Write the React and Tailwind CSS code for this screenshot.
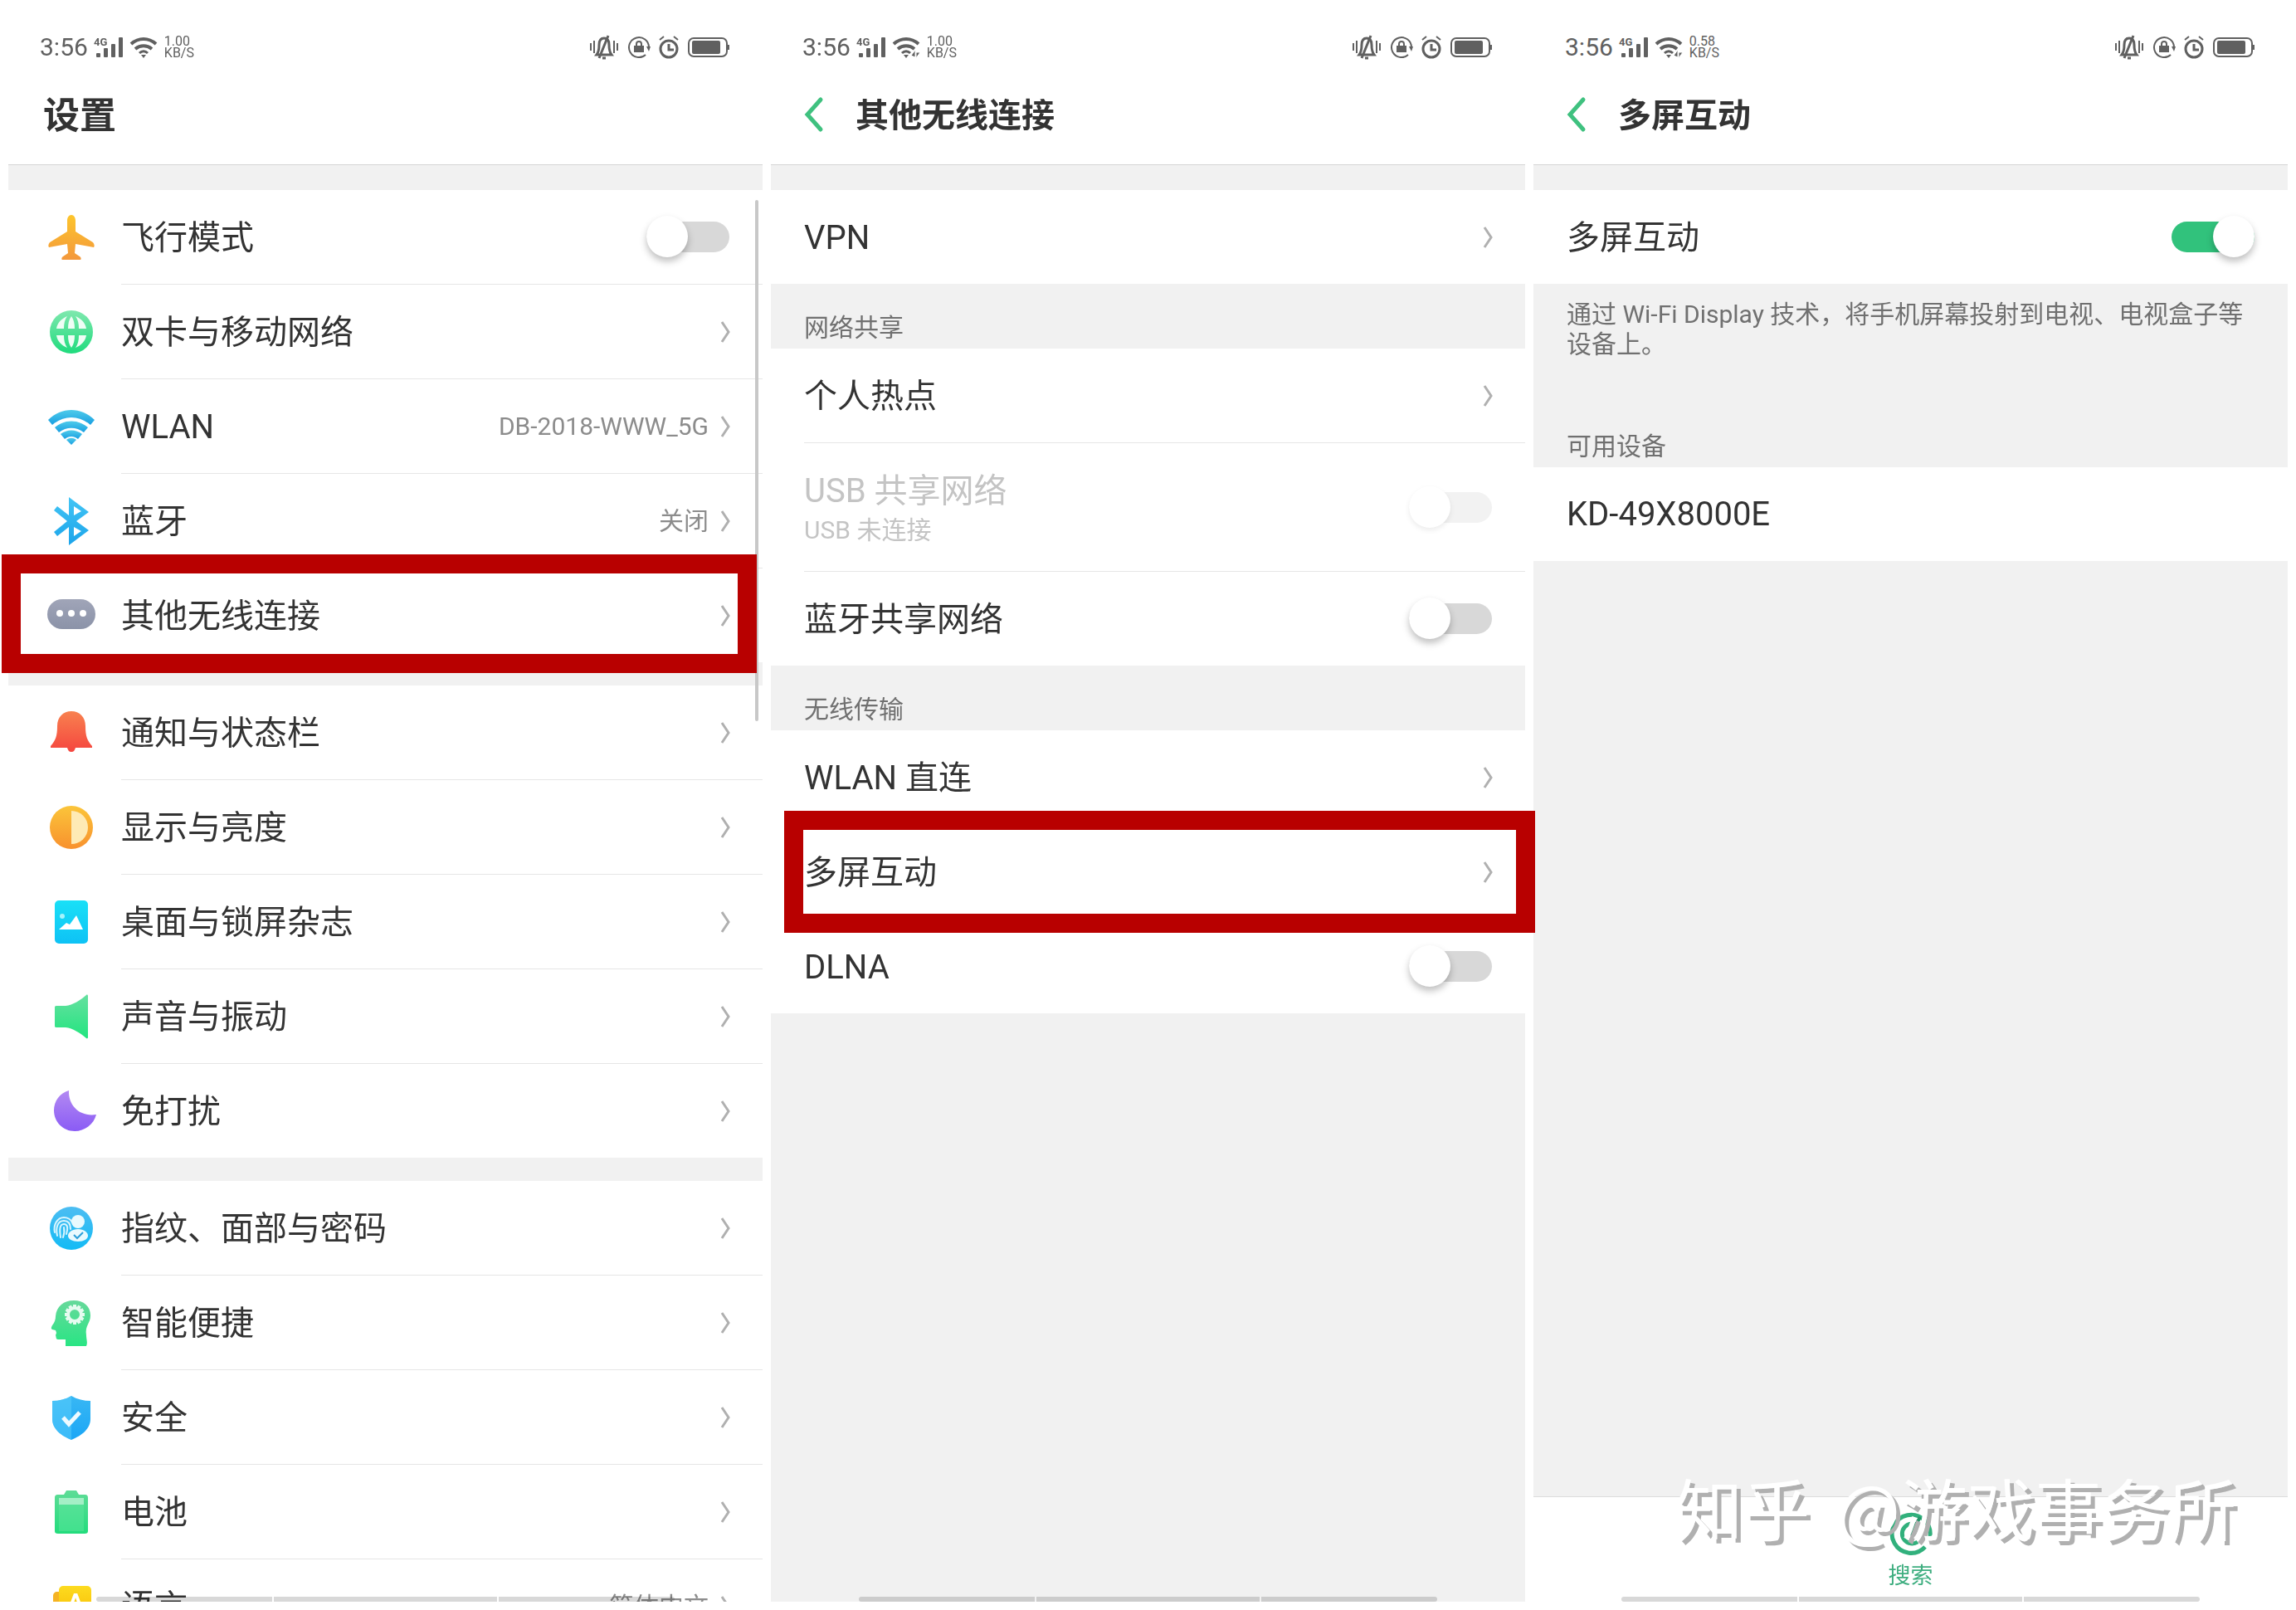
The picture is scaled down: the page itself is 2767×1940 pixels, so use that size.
import { Fragment } from "react";

function Gradient({ id, from, to }) {
  return (
    <linearGradient id={id} x1="0" y1="0" x2="0" y2="1">
      <stop offset="0" stopColor={from} />
      <stop offset="1" stopColor={to} />
    </linearGradient>
  );
}

function Icon({ id, from, to, children }) {
  return (
    <svg viewBox="0 0 60 60" className="size-[60px] shrink-0" fill={`url(#${id})`} aria-hidden="true">
      <defs>
        <Gradient id={id} from={from} to={to} />
      </defs>
      {children}
    </svg>
  );
}

const gearTeeth = Array.from({ length: 12 }, (_, i) => i * 30);

const icons = {
  plane: (
    <Icon id="plane" from="#fdc52c" to="#f3983c">
      <path d="M30 3c3 0 5 3 5 7v13l21 13c2 2 2 5 1 6l-22-4-1 11 6 4c2 1 2 4 1 4H19c-1 0-1-3 1-4l6-4-1-11-22 4c-1-1-1-4 1-6l21-13V10c0-4 2-7 5-7z" />
    </Icon>
  ),
  globe: (
    <Icon id="globe" from="#7fe8ae" to="#1fdb7d">
      <circle cx="30" cy="30" r="26" />
      <g fill="#effdf5">
        <path d="M30 11c-3 4-4 9-4 15h8c0-6-1-11-4-15zM30 49c-3-4-4-9-4-15h8c0 6-1 11-4 15z" />
        <path d="M25 11c-3 4-4 9-4 15h-9c1-7 6-12 13-15zM25 49c-3-4-4-9-4-15h-9c1 7 6 12 13 15z" />
        <path d="M35 11c3 4 4 9 4 15h9c-1-7-6-12-13-15zM35 49c3-4 4-9 4-15h9c-1 7-6 12-13 15z" />
      </g>
    </Icon>
  ),
  wlan: (
    <Icon id="wlan" from="#4fcbea" to="#199fe2">
      <path d="M2 22c16-16 40-16 56 0l-5 6c-14-12-32-12-46 0z" />
      <path d="M10 31c12-10 28-10 40 0l-5 6c-9-7-21-7-30 0z" />
      <path d="M17 39c8-6 18-6 26 0l-5 6c-5-4-11-4-16 0z" />
      <path d="M24 46c4-3 8-3 12 0l-6 6z" />
    </Icon>
  ),
  bluetooth: (
    <Icon id="bluetooth" from="#43c5f5" to="#1ba4ea">
      <path
        fillRule="evenodd"
        d="M27 1l24 18-15 11 15 11-24 18V37L13 48l-4-5 16-13L9 17l4-5 14 11zm6 11v11l9-5zm0 25v11l9-6z"
      />
    </Icon>
  ),
  more: (
    <Icon id="more" from="#a0a5b8" to="#8b93a8">
      <rect x="1" y="10" width="58" height="36" rx="18" />
      <g fill="#fff">
        <circle cx="16" cy="27" r="4" />
        <circle cx="30" cy="27" r="4" />
        <circle cx="44" cy="27" r="4" />
      </g>
    </Icon>
  ),
  bell: (
    <Icon id="bell" from="#f8814f" to="#f5463f">
      <path d="M30 4c10 0 17 7 17 18 0 12 2 17 8 24v2H35c-1 3-2 5-5 5s-4-2-5-5H5v-2c6-7 8-12 8-24 0-11 7-18 17-18z" />
    </Icon>
  ),
  sun: (
    <Icon id="sun" from="#fbc53a" to="#f8912e">
      <circle cx="30" cy="30" r="26" />
      <path d="M30 10a20 20 0 0 1 0 40z" fill="#feeab5" />
    </Icon>
  ),
  picture: (
    <Icon id="picture" from="#19e0f7" to="#0ec2f5">
      <rect x="10" y="4" width="40" height="52" rx="5" />
      <circle cx="19" cy="23" r="3" fill="#a5f3fb" />
      <path d="M15 39l9-8 4 2 8-11 8 17z" fill="#fff" />
    </Icon>
  ),
  speaker: (
    <Icon id="speaker" from="#66e0a0" to="#22e57f">
      <path d="M12 17h11c9-1 18-7 25-13 1-1 2 0 2 1v50c0 1-1 2-2 1-7-6-16-12-25-13H12c-2 0-2-1-2-2V19c0-1 0-2 2-2z" />
    </Icon>
  ),
  moon: (
    <Icon id="moon" from="#b38af2" to="#8a5bf5">
      <path d="M27 5c-1 18 13 32 33 29-3 12-14 20-26 20C20 54 9 43 9 29 9 18 16 8 27 5z" />
    </Icon>
  ),
  finger: (
    <Icon id="finger" from="#4dbdf2" to="#12bbf5">
      <circle cx="30" cy="30" r="26" />
      <g fill="none" stroke="#d9f5fe" strokeWidth="2" strokeLinecap="round">
        <path d="M10 35c-2-9 3-18 11-18 5 0 8 2 10 6" />
        <path d="M13 39c-2-9 0-18 8-18 6 0 8 5 8 10" />
        <path d="M17 41c-1-7-2-16 4-16 5 0 5 6 3 12" />
        <path d="M21 29c1 5 0 9-1 12" />
      </g>
      <g fill="#e9fafe">
        <circle cx="38" cy="22" r="8" />
        <path d="M38 31c7 0 12 4 12 8s-5 7-12 7-12-3-12-7 5-8 12-8z" />
      </g>
      <path d="M33 38l4 4 7-7" fill="none" stroke="#2b9fd9" strokeWidth="2" />
    </Icon>
  ),
  head: (
    <Icon id="head" from="#67d99b" to="#29e584">
      <path d="M33 3c12 0 20 7 20 18 0 10-7 12-5 24 0 5 2 9 0 13H23v-8h-9c-3 0-2-3-3-5l1-3-1-3-4-1c-2-1-1-3 0-5 3-4 4-7 4-11C12 10 21 3 33 3z" />
      <circle cx="34" cy="20" r="8" fill="none" stroke="#e6fbf0" strokeWidth="4" />
      {gearTeeth.map((angle) => (
        <rect key={angle} x="32" y="8" width="4" height="4" fill="#e6fbf0" transform={`rotate(${angle} 34 20)`} />
      ))}
    </Icon>
  ),
  shield: (
    <Icon id="shield" from="#38b7f4" to="#1ba6f6">
      <path d="M30 4c7 4 15 6 23 6v22c0 12-11 20-23 25C18 52 7 44 7 32V10c8 0 16-2 23-6z" />
      <path d="M30 4v53C18 52 7 44 7 32V10c8 0 16-2 23-6z" fill="#5cd0fb" fillOpacity="0.5" />
      <path d="M20 30l7 8 13-14" fill="none" stroke="#eefaff" strokeWidth="5" />
    </Icon>
  ),
  battery: (
    <Icon id="battery" from="#5fdc97" to="#22dc7c">
      <path d="M24 4h12l3 5h7c3 0 4 1 4 4v40c0 2-1 3-4 3H14c-3 0-4-1-4-3V13c0-3 1-4 4-4h7z" />
      <rect x="15" y="13" width="30" height="8" fill="#a4efc6" />
      <rect x="15" y="21" width="30" height="32" fill="#5de69d" fillOpacity="0.5" />
    </Icon>
  ),
  language: (
    <Icon id="language" from="#fddb1f" to="#f7b500">
      <path d="M8 17c0-3 2-5 5-5h10v44H8z" fill="#f5b323" />
      <rect x="15" y="5" width="39" height="48" rx="5" />
      <text x="35" y="35" textAnchor="middle" fontSize="30" fontWeight="700" fontFamily="Roboto, sans-serif" fill="#fff">
        A
      </text>
    </Icon>
  ),
};

const groups = [
  [
    { icon: "plane", label: "飞行模式", toggle: true },
    { icon: "globe", label: "双卡与移动网络" },
    { icon: "wlan", label: "WLAN", value: "DB-2018-WWW_5G" },
    { icon: "bluetooth", label: "蓝牙", value: "关闭" },
    { icon: "more", label: "其他无线连接", marked: true },
  ],
  [
    { icon: "bell", label: "通知与状态栏" },
    { icon: "sun", label: "显示与亮度" },
    { icon: "picture", label: "桌面与锁屏杂志" },
    { icon: "speaker", label: "声音与振动" },
    { icon: "moon", label: "免打扰" },
  ],
  [
    { icon: "finger", label: "指纹、面部与密码" },
    { icon: "head", label: "智能便捷" },
    { icon: "shield", label: "安全" },
    { icon: "battery", label: "电池" },
    { icon: "language", label: "语言", value: "简体中文" },
  ],
];

function StatusBar({ speed, traffic }) {
  return (
    <div className="flex h-[78px] items-center justify-between pt-9 pr-[39px] pl-[38px] text-[#606060]">
      <div className="flex items-center gap-2">
        <span className="text-[30px] leading-[42px]">3:56</span>
        <svg viewBox="0 0 34 26" className="h-[26px] w-[34px] overflow-visible" fill="currentColor" aria-hidden="true">
          <text x="-1" y="11" fontSize="13" fontWeight="700" fontFamily="Roboto, sans-serif">
            4G
          </text>
          <rect x="2" y="20" width="5" height="5" rx="1" />
          <rect x="11" y="14" width="5" height="11" rx="1" />
          <rect x="20" y="9" width="5" height="16" rx="1" />
          <rect x="29" y="1" width="5" height="24" rx="1" />
        </svg>
        <svg viewBox="0 0 34 26" className="h-[26px] w-[34px]" fill="none" stroke="currentColor" strokeWidth="4" aria-hidden="true">
          <path d="M2 9c9-8 21-8 30 0" />
          <path d="M7 15c6-5 14-5 20 0" />
          <path d="M12 20c3-3 7-3 10 0" strokeWidth="3" />
          <path d="M14 22h6l-3 4z" fill="currentColor" stroke="none" />
          {traffic && <path d="M23 23l5-7v9zM29 15v11l5-7h-5z" fill="currentColor" stroke="#fff" strokeWidth="1" />}
        </svg>
        <div className="text-[16px] leading-[14px]">
          <div>{speed}</div>
          <div>KB/S</div>
        </div>
      </div>
      <div className="flex items-center gap-[10px]">
        <svg viewBox="0 0 36 30" className="h-[30px] w-[36px]" fill="none" stroke="currentColor" strokeWidth="3" aria-hidden="true">
          <path d="M2 10v9M6 7v15M30 7v15M34 10v9" strokeWidth="2" />
          <path d="M9 24c3-4 3-8 3-12 0-5 2-8 6-8s6 3 6 8c0 4 0 8 3 12z" />
          <path d="M23 1L12 28M16 28h4" />
        </svg>
        <svg viewBox="0 0 28 28" className="size-7" fill="none" stroke="currentColor" strokeWidth="2" aria-hidden="true">
          <path d="M26 14A12 12 0 1 0 22 23" />
          <path d="M23 13h5l-2 6z" fill="currentColor" stroke="none" />
          <rect x="8" y="12" width="12" height="8" fill="currentColor" stroke="none" />
          <path d="M11 13v-3c0-4 6-4 6 0v3" />
        </svg>
        <svg viewBox="0 0 24 28" className="h-7 w-6" fill="none" stroke="currentColor" strokeWidth="3" aria-hidden="true">
          <circle cx="12" cy="16" r="10" />
          <path d="M12 10v7h6" />
          <path d="M1 5l5-4M23 5l-5-4" strokeWidth="2" />
        </svg>
        <svg viewBox="0 0 52 26" className="h-[26px] w-[52px]" fill="none" stroke="currentColor" strokeWidth="2" aria-hidden="true">
          <rect x="2" y="2" width="46" height="22" rx="6" />
          <rect x="6" y="5" width="34" height="16" rx="2" fill="currentColor" stroke="none" />
          <path d="M50 10v6" />
        </svg>
      </div>
    </div>
  );
}

function Chevron() {
  return (
    <svg viewBox="0 0 12 26" className="h-[26px] w-3 shrink-0" fill="none" stroke="#b0b0b0" strokeWidth="3" aria-hidden="true">
      <path d="M2 1l8 12-8 12" />
    </svg>
  );
}

function Toggle({ id, on, disabled }) {
  return (
    <input
      id={id}
      type="checkbox"
      role="switch"
      defaultChecked={on}
      disabled={disabled}
      className="relative h-[37px] w-[100px] shrink-0 appearance-none rounded-full bg-[#d8d8d8] before:absolute before:-top-[7px] before:left-0 before:size-[50px] before:rounded-full before:bg-white before:shadow-[0_5px_8px_rgba(0,0,0,0.25)] checked:bg-[#31c27c] checked:before:left-[50px] disabled:bg-[#f2f2f2] disabled:before:shadow-[0_3px_6px_rgba(0,0,0,0.08)]"
    />
  );
}

function Divider({ indent }) {
  return <div className={indent ? "ml-[136px] h-px bg-[#e6e6e6]" : "ml-10 h-px bg-[#e6e6e6]"} />;
}

function LinkRow({ icon, label, value }) {
  return (
    <a href="#" className={icon ? "flex h-[113px] items-center pr-[39px] pl-[46px]" : "flex h-[113px] items-center pr-[39px] pl-10"}>
      {icon && icons[icon]}
      <span className={icon ? "ml-[30px] flex-1 pt-0.5" : "flex-1 pt-0.5"}>{label}</span>
      {value && <span className="mr-[14px] text-[30px] text-[#8c8c8c]">{value}</span>}
      <Chevron />
    </a>
  );
}

function ToggleRow({ id, icon, label, on }) {
  return (
    <div className={icon ? "flex h-[113px] items-center pr-10 pl-[46px]" : "flex h-[113px] items-center pr-10 pl-10"}>
      {icon && icons[icon]}
      <label htmlFor={id} className={icon ? "ml-[30px] flex-1 pt-0.5" : "flex-1 pt-0.5"}>
        {label}
      </label>
      <Toggle id={id} on={on} />
    </div>
  );
}

function SectionTitle({ children }) {
  return <h2 className="flex h-[78px] items-end px-10 pb-[7px] text-[30px] leading-9 text-[#707070]">{children}</h2>;
}

function HomeBar() {
  return (
    <div className="absolute inset-x-[106px] bottom-0 flex h-1.5 gap-0.5 overflow-hidden rounded-sm mix-blend-multiply">
      <div className="flex-[212] bg-[#d8d8d8]" />
      <div className="flex-[270] bg-[#d8d8d8]" />
      <div className="flex-[212] bg-[#d8d8d8]" />
    </div>
  );
}

function Screen({ title, speed, traffic, back, className, children }) {
  return (
    <section className={`relative flex h-full min-w-0 flex-1 flex-col overflow-y-clip ${className}`}>
      <header className="shrink-0 border-b border-[#d4d4d4] bg-white">
        <StatusBar speed={speed} traffic={traffic} />
        <div className="flex h-[120px] items-center px-10 font-bold">
          {back && (
            <button type="button" aria-label="返回" className="mr-[38px]">
              <svg viewBox="0 0 24 44" className="h-11 w-6" fill="none" stroke="#3fc17f" strokeWidth="5" strokeLinecap="round">
                <path d="M20 4L4 22l16 18" />
              </svg>
            </button>
          )}
          <h1 className={back ? "pt-1 text-[40px]" : "pt-1 pl-0.5 text-[44px]"}>{title}</h1>
        </div>
      </header>
      <div className="h-[30px] shrink-0 bg-[#f1f1f1]" />
      {children}
      <HomeBar />
    </section>
  );
}

function SettingsScreen() {
  return (
    <Screen title="设置" speed="1.00" className="bg-white">
      {groups.map((rows, g) => (
        <Fragment key={g}>
          {g > 0 && <div className="h-7 shrink-0 bg-[#f1f1f1]" />}
          <ul>
            {rows.map((row, i) => (
              <li key={row.label} className="relative">
                {row.toggle ? <ToggleRow id={row.icon} {...row} /> : <LinkRow {...row} />}
                {i < rows.length - 1 && <Divider indent />}
                {row.marked && (
                  <div className="absolute -top-[17px] right-[7px] -bottom-[13px] -left-2 z-10 border-[23px] border-[#b80000]" />
                )}
              </li>
            ))}
          </ul>
        </Fragment>
      ))}
      <div className="absolute top-[241px] right-[5px] h-[628px] w-1 rounded-full bg-[#c8c8c8]" />
    </Screen>
  );
}

function WirelessScreen() {
  return (
    <Screen title="其他无线连接" speed="1.00" traffic back className="z-10 bg-[#f1f1f1]">
      <div className="bg-white">
        <LinkRow label="VPN" />
      </div>
      <SectionTitle>网络共享</SectionTitle>
      <div className="bg-white">
        <LinkRow label="个人热点" />
        <Divider />
        <div className="flex h-[154px] items-center px-10">
          <label htmlFor="usb" className="flex-1 text-[#c4c4c4]">
            <span className="block leading-[56px]">USB 共享网络</span>
            <span className="block text-[30px] leading-[38px]">USB 未连接</span>
          </label>
          <Toggle id="usb" disabled />
        </div>
        <Divider />
        <ToggleRow id="bt-share" label="蓝牙共享网络" />
      </div>
      <SectionTitle>无线传输</SectionTitle>
      <div className="bg-white">
        <LinkRow label="WLAN 直连" />
        <Divider />
        <div className="relative">
          <LinkRow label="多屏互动" />
          <div className="absolute -top-[17px] -right-3 -bottom-[17px] left-4 border-[23px] border-[#b80000]" />
        </div>
        <Divider />
        <ToggleRow id="dlna" label="DLNA" />
      </div>
    </Screen>
  );
}

function CastScreen() {
  return (
    <Screen title="多屏互动" speed="0.58" traffic back className="bg-[#f1f1f1]">
      <div className="bg-white">
        <ToggleRow id="cast" label="多屏互动" on />
      </div>
      <p className="px-10 pt-[19px] text-[30px] leading-9 text-[#707070]">
        通过 Wi-Fi Display 技术，将手机屏幕投射到电视、电视盒子等设备上。
      </p>
      <div className="h-[52px]" />
      <SectionTitle>可用设备</SectionTitle>
      <div className="flex h-[113px] items-center bg-white px-10">KD-49X8000E</div>
      <footer className="mt-auto flex h-[127px] flex-col items-center border-t border-[#dcdcdc] bg-white pt-[18px]">
        <button type="button" className="flex flex-col items-center text-[27px] leading-[50px] text-[#3fae80]">
          <svg viewBox="0 0 52 52" className="size-[52px]" fill="none" stroke="#31b07c" strokeWidth="5" aria-hidden="true">
            <path d="M49 29A23 23 0 1 0 43 42" />
            <path d="M34 16A12 12 0 1 0 34 36" />
            <path d="M25 28L37 6" strokeWidth="4" stroke="#249468" />
          </svg>
          搜索
        </button>
      </footer>
      <div className="pointer-events-none absolute right-[62px] bottom-[55px] flex gap-8 font-['Noto_Sans_CJK_SC',sans-serif] text-[81px] leading-[120px] whitespace-nowrap text-white [text-shadow:5px_5px_0_#b0b0b0]">
        <span>知乎</span>
        <span>@游戏事务所</span>
      </div>
    </Screen>
  );
}

function App() {
  return (
    <main className="flex h-screen gap-[10px] bg-white px-[10px] pb-[10px] font-[Roboto,'Noto_Sans_CJK_SC',sans-serif] text-[40px] leading-[56px] text-[#333]">
      <SettingsScreen />
      <WirelessScreen />
      <CastScreen />
    </main>
  );
}

export default App;
